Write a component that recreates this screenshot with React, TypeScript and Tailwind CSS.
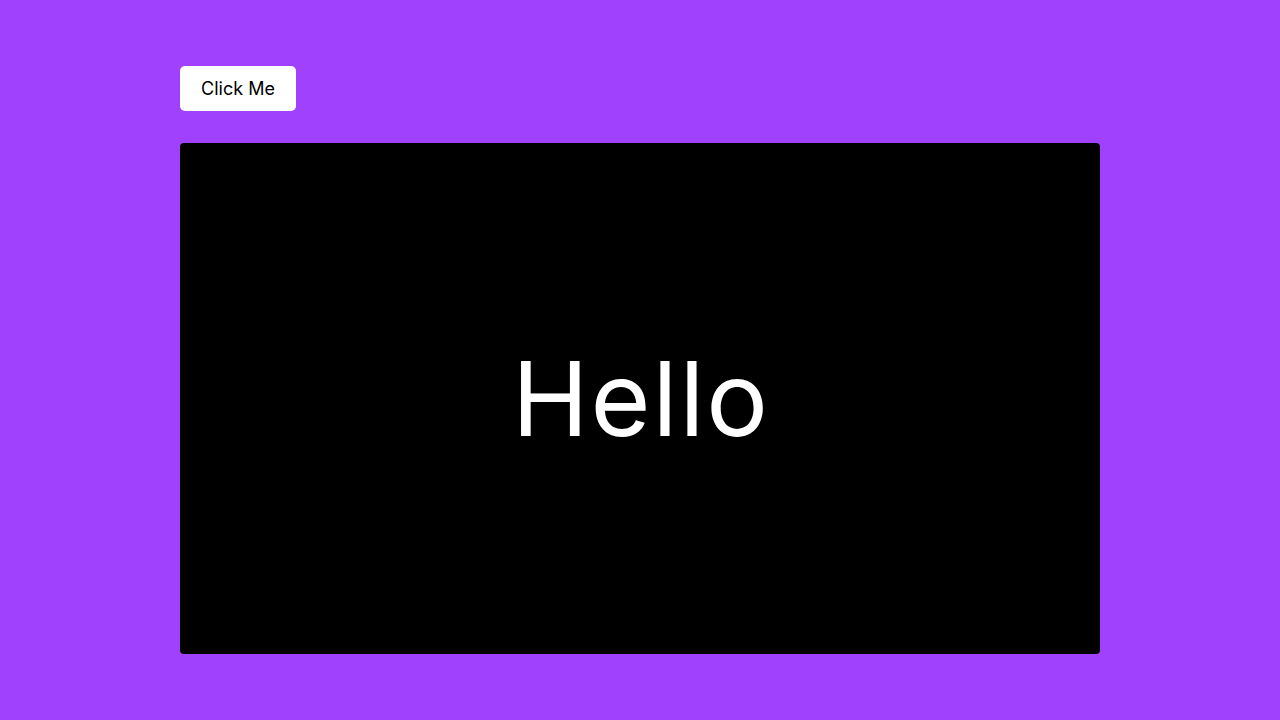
export default function App() {
  return (
    <div className="min-h-screen w-full bg-[#a041fe] pt-[66px] font-['Inter',sans-serif]">
      <div className="mx-auto flex w-[920px] flex-col items-start gap-8">
        <button className="h-[45px] w-[116px] rounded-[5px] bg-white text-[18px] text-black">
          Click Me
        </button>
        <div className="flex h-[511px] w-full items-center justify-center rounded-[4px] bg-black">
          <h1 className="pl-[2px] text-[103px] leading-none font-normal tracking-[2px] text-white">
            Hello
          </h1>
        </div>
      </div>
    </div>
  );
}
